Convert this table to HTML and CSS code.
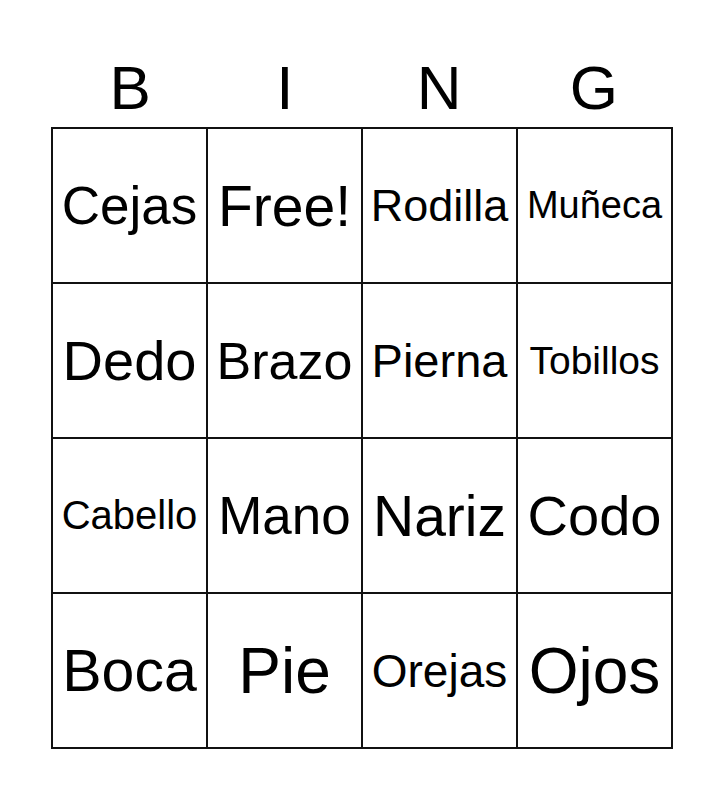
FILE: index.html
```html
<!DOCTYPE html>
<html lang="es">
<head>
<meta charset="utf-8">
<title>Bingo</title>
<link rel="stylesheet" href="styles.css">
</head>
<body>
<div class="card">
  <div class="header">
    <span>B</span><span>I</span><span>N</span><span>G</span>
  </div>
  <div class="grid">
    <div class="cell s53">Cejas</div>
    <div class="cell s57">Free!</div>
    <div class="cell s45">Rodilla</div>
    <div class="cell s38">Muñeca</div>
    <div class="cell s56">Dedo</div>
    <div class="cell s52">Brazo</div>
    <div class="cell s47">Pierna</div>
    <div class="cell s39">Tobillos</div>
    <div class="cell s40">Cabello</div>
    <div class="cell s53">Mano</div>
    <div class="cell s57">Nariz</div>
    <div class="cell s56">Codo</div>
    <div class="cell s59">Boca</div>
    <div class="cell s64">Pie</div>
    <div class="cell s46">Orejas</div>
    <div class="cell s64">Ojos</div>
  </div>
</div>
</body>
</html>
```
FILE: styles.css
```css
html, body {
  margin: 0;
  padding: 0;
  background: #fff;
}
body {
  font-family: "Liberation Sans", Arial, sans-serif;
  color: #000;
}
.card {
  width: 622px;
  margin: 0 auto;
  padding-left: 1px;
  padding-top: 49px;
}
.header {
  display: grid;
  grid-template-columns: repeat(4, 1fr);
  height: 78px;
  font-size: 62px;
  line-height: 78px;
  text-align: center;
  padding: 0 2px;
}
.grid {
  display: grid;
  grid-template-columns: repeat(4, 1fr);
  grid-auto-rows: 153px;
  gap: 2px;
  background: #111;
  border: 2px solid #111;
  width: 618px;
}
.cell {
  background: #fff;
  display: flex;
  align-items: center;
  justify-content: center;
  text-align: center;
  white-space: nowrap;
  overflow: hidden;
}
.s38 { font-size: 38px; }
.s39 { font-size: 39px; }
.s40 { font-size: 40px; }
.s45 { font-size: 45px; }
.s46 { font-size: 46px; }
.s47 { font-size: 47px; }
.s52 { font-size: 52px; }
.s53 { font-size: 53px; }
.s56 { font-size: 56px; }
.s57 { font-size: 57px; }
.s59 { font-size: 59px; }
.s64 { font-size: 64px; }
```
